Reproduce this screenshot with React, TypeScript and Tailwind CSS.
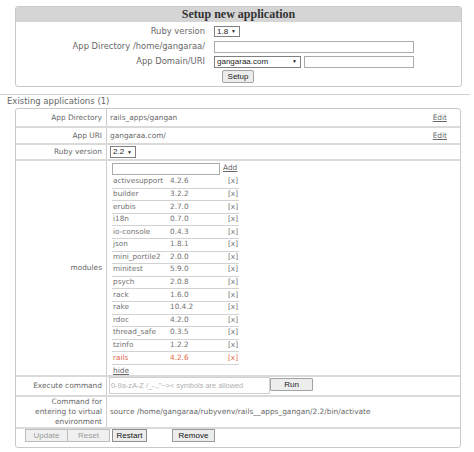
import React from "react";

const modules: { name: string; version: string; active?: boolean }[] = [
  { name: "activesupport", version: "4.2.6" },
  { name: "builder", version: "3.2.2" },
  { name: "erubis", version: "2.7.0" },
  { name: "i18n", version: "0.7.0" },
  { name: "io-console", version: "0.4.3" },
  { name: "json", version: "1.8.1" },
  { name: "mini_portile2", version: "2.0.0" },
  { name: "minitest", version: "5.9.0" },
  { name: "psych", version: "2.0.8" },
  { name: "rack", version: "1.6.0" },
  { name: "rake", version: "10.4.2" },
  { name: "rdoc", version: "4.2.0" },
  { name: "thread_safe", version: "0.3.5" },
  { name: "tzinfo", version: "1.2.2" },
  { name: "rails", version: "4.2.6", active: true },
];

function FakeSelect({ value, className }: { value: string; className: string }) {
  return (
    <div
      className={`${className} flex items-center justify-between border border-[#808080] bg-white pl-[2px] pr-[3px] font-['Liberation_Sans',Arial,sans-serif] text-[8px] leading-none text-[#222]`}
    >
      <span>{value}</span>
      <span className="text-[5px]">▼</span>
    </div>
  );
}

function Row({
  label,
  children,
  className,
}: {
  label: React.ReactNode;
  children: React.ReactNode;
  className: string;
}) {
  return (
    <div className={`grid grid-cols-[91px_1fr] border-b-2 border-[#dadada] ${className}`}>
      <div className="flex items-center justify-end border-r border-[#cfcfcf] pr-[4px] text-right">{label}</div>
      <div className="flex items-center pl-[3px]">{children}</div>
    </div>
  );
}

export default function App() {
  return (
    <div className="h-[452px] w-[474px] overflow-hidden bg-white pt-[6px] font-['DejaVu_Sans',Verdana,sans-serif] text-[#686868]">
      {/* setup box */}
      <div className="ml-[15px] h-[81px] w-[447px] overflow-hidden rounded-[3px] border border-[#c9c9c9]">
        <div className="h-[15px] bg-[#d5d5d5] text-center font-['Liberation_Serif',serif] text-[12px] font-bold leading-[15px] text-[#333]">
          Setup new application
        </div>
        <div className="pt-[2px] text-[8.4px]">
          <div className="grid h-[15px] grid-cols-[198px_1fr] items-center">
            <div className="pr-[9px] text-right">Ruby version</div>
            <FakeSelect value="1.8" className="h-[11px] w-[26px]" />
          </div>
          <div className="grid h-[15px] grid-cols-[198px_1fr] items-center">
            <div className="pr-[9px] text-right">App Directory /home/gangaraa/</div>
            <div className="h-[12px] w-[200px] border border-[#ababab] bg-white" />
          </div>
          <div className="grid h-[15px] grid-cols-[198px_1fr] items-center">
            <div className="pr-[9px] text-right">App Domain/URI</div>
            <div className="flex items-center gap-[3px]">
              <FakeSelect value="gangaraa.com" className="h-[12px] w-[87px]" />
              <div className="h-[12px] w-[110px] border border-[#ababab] bg-white" />
            </div>
          </div>
          <div className="grid h-[15px] grid-cols-[198px_1fr] items-center">
            <div />
            <div className="ml-[8px] flex h-[13px] w-[32px] items-center justify-center rounded-[2px] border border-[#a3a3a3] bg-[#ececec] font-['Liberation_Sans',Arial,sans-serif] text-[8px] text-[#222]">
              Setup
            </div>
          </div>
        </div>
      </div>

      <div className="mt-[7px] h-px w-[470px] bg-[#cfcfcf]" />
      <div className="h-[13px] pl-[7px] text-[8.5px] leading-[13px]">Existing applications (1)</div>

      {/* existing application */}
      <div className="ml-[15px] w-[446px] rounded-[3px] border border-[#c9c9c9] text-[7.4px]">
        <Row label="App Directory" className="h-[19px]">
          <div className="flex w-full items-center justify-between pr-[13px]">
            <span>rails_apps/gangan</span>
            <span className="underline">Edit</span>
          </div>
        </Row>
        <Row label="App URI" className="h-[17px]">
          <div className="flex w-full items-center justify-between pr-[13px]">
            <span>gangaraa.com/</span>
            <span className="underline">Edit</span>
          </div>
        </Row>
        <Row label="Ruby version" className="h-[16px]">
          <FakeSelect value="2.2" className="h-[12px] w-[26px]" />
        </Row>
        <Row label="modules" className="h-[216px]">
          <div className="flex h-full flex-col pl-[2px] pt-[2px]">
            <div className="flex h-[13px] items-start">
              <div className="h-[12px] w-[108px] border border-[#ababab] bg-white" />
              <span className="ml-[3px] leading-[10px] underline">Add</span>
            </div>
            <div className="w-[127px] text-[7.3px]">
              {modules.map((m) => (
                <div
                  key={m.name}
                  className={`flex h-[12.6px] items-center border-b border-[#d2d2d2] ${m.active ? "text-[#e26a48]" : "text-[#727272]"}`}
                >
                  <span className="w-[58px] pl-[1px]">{m.name}</span>
                  <span className="flex-1">{m.version}</span>
                  <span className="pr-[1px]">[x]</span>
                </div>
              ))}
            </div>
            <div className="h-[10px] pl-[1px] leading-[11px] underline">hide</div>
          </div>
        </Row>
        <Row label="Execute command" className="h-[20px]">
          <div className="-ml-[1px] flex h-full items-start">
            <div className="flex h-[17px] w-[161px] items-center border border-[#cfcfcf] bg-white pl-[1px] font-['Liberation_Sans',Arial,sans-serif] text-[7.4px] text-[#b0b0b0]">
              {'0-9a-zA-Z /_-.,"~>< symbols are allowed'}
            </div>
            <div className="mt-[1px] flex h-[13px] w-[43px] items-center justify-center rounded-[1px] border border-[#a3a3a3] bg-[#ededed] font-['Liberation_Sans',Arial,sans-serif] text-[8px] text-[#222]">
              Run
            </div>
          </div>
        </Row>
        <Row
          label={
            <span className="block leading-[10px]">
              Command for
              <br />
              entering to virtual
              <br />
              environment
            </span>
          }
          className="h-[32px]"
        >
          <span>source /home/gangaraa/rubyvenv/rails__apps_gangan/2.2/bin/activate</span>
        </Row>
        <div className="flex h-[18px] items-start pl-[9px] font-['Liberation_Sans',Arial,sans-serif] text-[8px]">
          <div className="flex h-[13px] w-[43px] items-center justify-center border border-[#bdbdbd] bg-[#f0f0f0] text-[#9a9a9a]">
            Update
          </div>
          <div className="flex h-[13px] w-[42px] items-center justify-center border border-l-0 border-[#bdbdbd] bg-[#f0f0f0] text-[#9a9a9a]">
            Reset
          </div>
          <div className="ml-[2px] flex h-[13px] w-[35px] items-center justify-center border border-[#8f8f8f] bg-[#ececec] text-[#111]">
            Restart
          </div>
          <div className="ml-[25px] flex h-[13px] w-[43px] items-center justify-center border border-[#9a9a9a] bg-[#ececec] text-[#111]">
            Remove
          </div>
        </div>
      </div>
    </div>
  );
}
